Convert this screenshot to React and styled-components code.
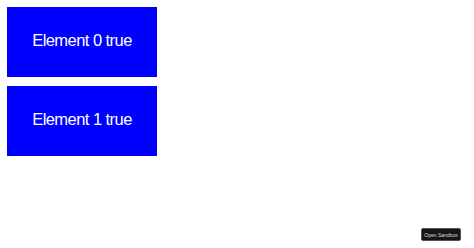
import React from "react";
import styled, { createGlobalStyle } from "styled-components";

const GlobalStyle = createGlobalStyle`
  html, body { margin: 0; padding: 0; background: #fff; }
  body { font-family: "Liberation Sans", Arial, sans-serif; }
`;

const List = styled.div`
  display: flex;
  flex-direction: column;
  gap: 9px;
  padding: 7px;
`;

const Element = styled.div`
  box-sizing: border-box;
  width: 150px;
  height: 70px;
  padding-bottom: 3px;
  background: #0000ff;
  color: #fff;
  display: flex;
  align-items: center;
  justify-content: center;
  font-size: 16.5px;
  letter-spacing: -0.55px;
`;

const SandboxButton = styled.button`
  position: fixed;
  right: 13px;
  bottom: 7px;
  width: 40px;
  height: 13px;
  display: flex;
  align-items: center;
  justify-content: center;
  background: #151515;
  color: #ddd;
  border: 1px solid #555;
  border-radius: 2px;
  font-family: "Liberation Sans", Arial, sans-serif;
  font-size: 5px;
  padding: 0;
`;

const items = [0, 1];

export default function App() {
  return (
    <>
      <GlobalStyle />
      <List>
        {items.map((i) => (
          <Element key={i}>Element {i} true</Element>
        ))}
      </List>
      <SandboxButton>Open Sandbox</SandboxButton>
    </>
  );
}
